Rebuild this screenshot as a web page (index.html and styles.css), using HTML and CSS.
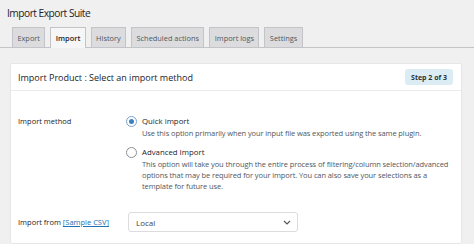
FILE: index.html
```html
<!DOCTYPE html>
<html>
<head>
<meta charset="utf-8">
<link rel="stylesheet" href="styles.css">
</head>
<body>
<div class="wrap">
  <h1 class="title">Import Export Suite</h1>
  <nav class="tabs">
    <span class="tab">Export</span>
    <span class="tab active">Import</span>
    <span class="tab">History</span>
    <span class="tab">Scheduled actions</span>
    <span class="tab">Import logs</span>
    <span class="tab">Settings</span>
  </nav>
  <div class="panel">
    <div class="panel-head">
      <span class="panel-title">Import Product : Select an import method</span>
      <span class="badge">Step 2 of 3</span>
    </div>
    <div class="panel-body">
      <div class="row">
        <div class="label">Import method</div>
        <div class="field">
          <div class="option">
            <span class="radio checked"></span>
            <div class="opt-text">
              <div class="opt-title">Quick import</div>
              <div class="opt-desc">Use this option primarily when your input file was exported using the same plugin.</div>
            </div>
          </div>
          <div class="option">
            <span class="radio"></span>
            <div class="opt-text">
              <div class="opt-title">Advanced Import</div>
              <div class="opt-desc">This option will take you through the entire process of filtering/column selection/advanced options that may be required for your import. You can also save your selections as a template for future use.</div>
            </div>
          </div>
        </div>
      </div>
      <div class="row row-from">
        <div class="label">Import from <a href="#" class="link">[Sample CSV]</a></div>
        <div class="field">
          <div class="select"><span>Local</span>
            <svg class="chev" width="8" height="5" viewBox="0 0 8 5"><path d="M1 1l3 3 3-3" fill="none" stroke="#50575e" stroke-width="1.2"/></svg>
          </div>
        </div>
      </div>
    </div>
  </div>
</div>
</body>
</html>
```

FILE: styles.css
```css
html, body {
  margin: 0;
  padding: 0;
  background: #f0f0f1;
  font-family: "Open Sans", "Noto Sans", sans-serif;
  color: #1d2327;
}
body {
  height: 244px;
  overflow: hidden;
}
.wrap {
  padding-top: 3px;
}
.title {
  margin: 0 0 0 7px;
  font-size: 10.2px;
  letter-spacing: -0.5px;
  font-weight: 400;
  line-height: 20px;
  color: #1d2327;
}
.tabs {
  display: flex;
  gap: 5px;
  margin-top: 4px;
  padding-left: 12px;
  border-bottom: 1px solid #c3c4c7;
  height: 20px;
}
.tab {
  display: flex;
  align-items: center;
  padding: 0 4.4px;
  height: 19px;
  background: #dcdcde;
  border: 1px solid #c3c4c7;
  border-bottom: none;
  font-size: 7.4px;
  color: #50575e;
  font-weight: 500;
}
.tab.active {
  background: #f6f6f7;
  color: #1d2327;
  font-weight: 600;
  height: 20px;
  margin-bottom: -1px;
}
.panel {
  margin: 15px 12px 0 10px;
  background: #fff;
  border: 1px solid #e6e6e8;
  border-radius: 2px;
  height: 181px;
  box-sizing: border-box;
}
.panel-head {
  display: flex;
  align-items: center;
  justify-content: space-between;
  height: 26px;
  padding: 0 8px 0 7px;
  border-bottom: 1px solid #ececee;
}
.panel-title {
  font-size: 9px;
  font-weight: 500;
  color: #1d2327;
}
.badge {
  background: #dbecf4;
  color: #2c3338;
  font-size: 7px;
  font-weight: 700;
  border-radius: 3px;
  padding: 0 6px;
  height: 16px;
  display: flex;
  align-items: center;
}
.panel-body {
  padding: 24px 8px 0 7px;
}
.row {
  display: grid;
  grid-template-columns: 108px 1fr;
}
.label {
  font-size: 7.5px;
  font-weight: 500;
  line-height: 12px;
  color: #1d2327;
}
.option {
  display: flex;
  gap: 5px;
  margin-bottom: 7px;
}
.radio {
  flex: none;
  width: 9px;
  height: 9px;
  border: 1px solid #8c8f94;
  border-radius: 50%;
  margin-top: 1px;
  position: relative;
  background: #fff;
}
.radio.checked {
  border-color: #7e9fc4;
}
.radio.checked::after {
  content: "";
  position: absolute;
  left: 2px;
  top: 2px;
  width: 5px;
  height: 5px;
  border-radius: 50%;
  background: #3582c4;
}
.opt-title {
  font-size: 7.8px;
  font-weight: 500;
  line-height: 12px;
  color: #1d2327;
}
.opt-desc {
  margin-top: 1px;
  font-size: 7.5px;
  letter-spacing: -0.1px;
  line-height: 11px;
  color: #50575e;
  max-width: 312px;
}
.row-from {
  margin-top: 13px;
  align-items: center;
}
.link {
  color: #2271b1;
}
.select {
  width: 170px;
  height: 20px;
  box-sizing: border-box;
  border: 1px solid #dcdcde;
  border-radius: 3px;
  display: flex;
  align-items: center;
  justify-content: space-between;
  padding: 0 6px 0 7px;
  font-size: 8px;
  color: #3c434a;
  margin-left: 2px;
}
```
